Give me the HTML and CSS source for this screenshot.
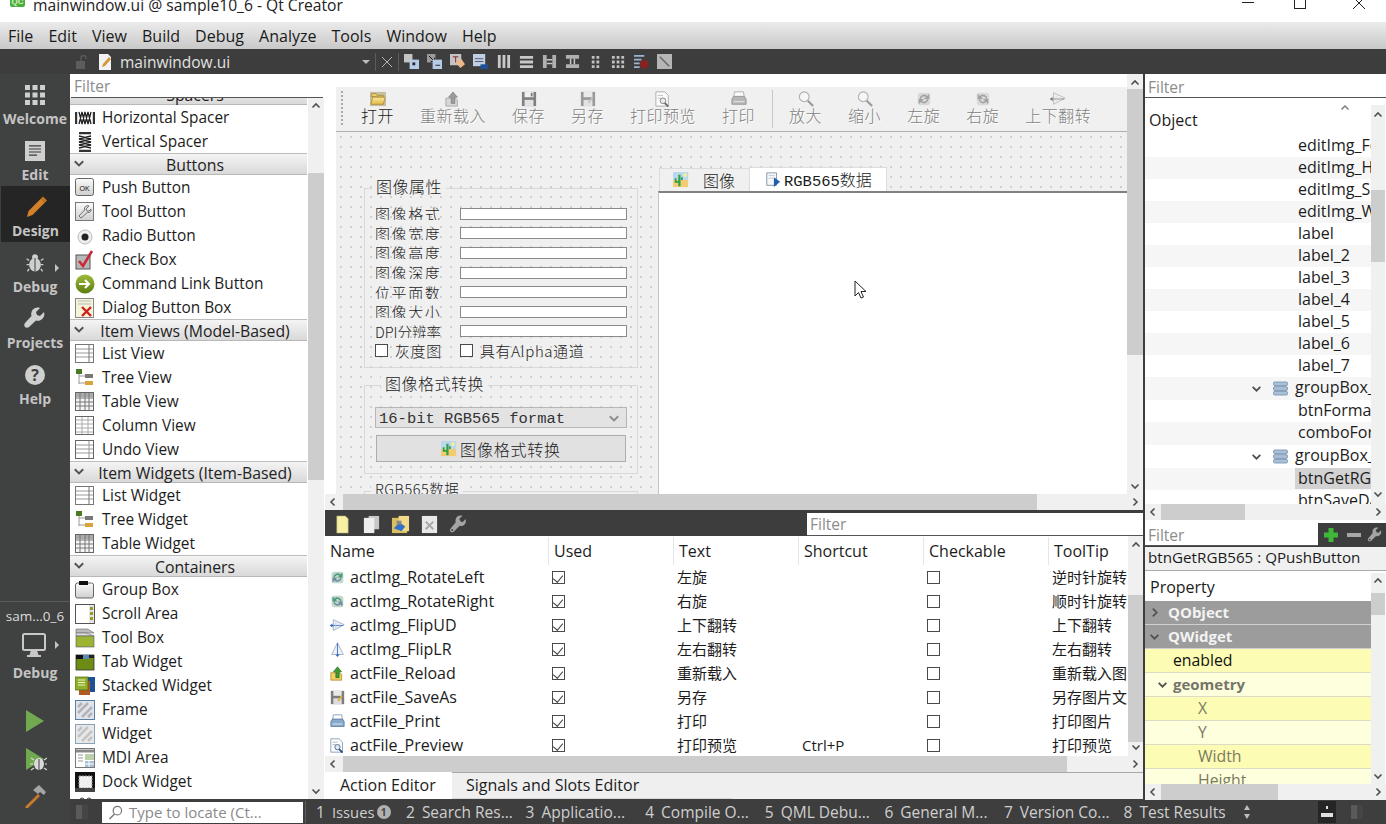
FILE: index.html
```html
<!DOCTYPE html>
<html lang="en">
<head>
<meta charset="utf-8">
<title>mainwindow.ui @ sample10_6 - Qt Creator</title>
<link rel="stylesheet" href="styles.css">
</head>
<body>
<svg class="sprite" xmlns="http://www.w3.org/2000/svg">
  <defs>
    <linearGradient id="gBtn" x1="0" y1="0" x2="0" y2="1"><stop offset="0" stop-color="#fbfbfb"/><stop offset="1" stop-color="#cfcfcf"/></linearGradient>
    <linearGradient id="gGreen" x1="0" y1="0" x2="0" y2="1"><stop offset="0" stop-color="#9dbb3a"/><stop offset="1" stop-color="#5c7d12"/></linearGradient>
    <linearGradient id="gFolder" x1="0" y1="0" x2="0" y2="1"><stop offset="0" stop-color="#fbe89a"/><stop offset="1" stop-color="#e3b94a"/></linearGradient>
    <symbol id="c-up" viewBox="0 0 10 10"><path d="M1.5 6.5 5 3l3.5 3.5" fill="none" stroke="#505050" stroke-width="1.6"/></symbol>
    <symbol id="c-dn" viewBox="0 0 10 10"><path d="M1.5 3.5 5 7l3.500-3.500" fill="none" stroke="#505050" stroke-width="1.6"/></symbol>
    <symbol id="c-l" viewBox="0 0 10 10"><path d="M6.500 1.500 3 5l3.500 3.500" fill="none" stroke="#505050" stroke-width="1.6"/></symbol>
    <symbol id="c-r" viewBox="0 0 10 10"><path d="M3.500 1.500 7 5 3.500 8.500" fill="none" stroke="#505050" stroke-width="1.600"/></symbol>

    <symbol id="m-welcome" viewBox="0 0 20 20"><path fill="#cfcfcf" d="M0 0h5v5H0zM7.500 0h5v5h-5zM15 0h5v5h-5zM0 7.500h5v5H0zM7.500 7.500h5v5h-5zM15 7.500h5v5h-5zM0 15h5v5H0zM7.500 15h5v5h-5zM15 15h5v5h-5z"/></symbol>
    <symbol id="m-edit" viewBox="0 0 20 20"><rect width="20" height="20" fill="#cfcfcf"/><path d="M4 5h12M4 8h12M4 11h12M4 14h8" stroke="#3d3d3d" stroke-width="1.200"/></symbol>
    <symbol id="m-design" viewBox="0 0 24 24"><path d="M3 22l1.500-6L17 3.500l4 4L8.500 20z" fill="#d2802a"/><path d="M17 3.500l2-2 4 4-2 2z" fill="#c9741f"/></symbol>
    <symbol id="m-debug" viewBox="0 0 24 24"><ellipse cx="12" cy="14" rx="7" ry="8" fill="#cfcfcf"/><circle cx="12" cy="5" r="3.500" fill="#cfcfcf"/><path d="M5 9 2 7M19 9l3-2M5 14H2M19 14h3M5 19l-2 3M19 19l2 3" stroke="#cfcfcf" stroke-width="1.600"/><path d="M12 6v16" stroke="#3f4040" stroke-width="1.200"/></symbol>
    <symbol id="m-proj" viewBox="0 0 24 24"><path d="M21 5l-4 4-3-1-1-3 4-4c-3-1-6 0-7.500 2C8 5 8 7.500 8.500 9L2 16c-1 1-1 3 0 4s3 1 4 0l7-6.500c1.500.5 4 .5 5.500-1C21 11 22 8 21 5z" fill="#cfcfcf"/></symbol>
    <symbol id="m-help" viewBox="0 0 24 24"><circle cx="12" cy="12" r="10" fill="#cfcfcf"/><text x="12" y="18" text-anchor="middle" font-family="Open Sans" font-weight="700" font-size="16" fill="#3f4040">?</text></symbol>
    <symbol id="m-mon" viewBox="0 0 24 24"><rect x="1" y="1" width="22" height="16" rx="1.500" fill="#3f4040" stroke="#c8c8c8" stroke-width="2"/><path d="M9 17h6l1.500 5h-9z" fill="#c8c8c8"/><path d="M5 22h14v2H5z" fill="#c8c8c8"/></symbol>
    <symbol id="m-play" viewBox="0 0 20 24"><path d="M1 1l18 11L1 23z" fill="#71a950"/></symbol>
    <symbol id="m-playb" viewBox="0 0 22 24"><path d="M1 1l18 11L1 23z" fill="#71a950"/><ellipse cx="14" cy="17" rx="5" ry="6" fill="#dadada"/><path d="M14 11v12M9 13l-3-2M19 13l3-2M8 17H5M20 17h3M9 21l-3 2M19 21l3 2" stroke="#dadada" stroke-width="1.200"/><path d="M14 12v11" stroke="#3f4040"/></symbol>
    <symbol id="m-ham" viewBox="0 0 24 24"><path d="M2 23l13-13 2 2L4 25z" fill="#c97a2b"/><path d="M10 6l6-5 7 7-2 3-4-3-2 2z" fill="#a5a5a5"/></symbol>

    <symbol id="w-hs" viewBox="0 0 20 20"><path d="M1 4v12M19 4v12" stroke="#333" stroke-width="2.400"/><path d="M4 4l3 12 3-12 3 12 3-12M4 16l3-12 3 12 3-12 3 12" fill="none" stroke="#222" stroke-width="1.300"/></symbol>
    <symbol id="w-vs" viewBox="0 0 20 20"><path d="M4 1h12M4 19h12" stroke="#333" stroke-width="2.400"/><path d="M4 4l12 3L4 10l12 3L4 16M16 4 4 7l12 3L4 13l12 3" fill="none" stroke="#222" stroke-width="1.300"/></symbol>
    <symbol id="w-push" viewBox="0 0 20 20"><rect x=".5" y=".5" width="18" height="17" rx="2" fill="url(#gBtn)" stroke="#666"/><text x="9.500" y="12.500" text-anchor="middle" font-family="Liberation Sans" font-size="7" fill="#111">OK</text></symbol>
    <symbol id="w-tool" viewBox="0 0 20 20"><rect x=".5" y=".5" width="18" height="18" fill="url(#gBtn)" stroke="#777"/><path d="M14 4l-3 3 1 2 2 0 2-2c.5 2-1 4-3.500 3.500L6 16l-2-2 5.500-6C9 5 11 3 14 4z" fill="#ddd" stroke="#555" stroke-width=".8"/></symbol>
    <symbol id="w-radio" viewBox="0 0 20 20"><circle cx="10" cy="11" r="7" fill="#eee" stroke="#bbb"/><circle cx="10" cy="11" r="3.500" fill="#222"/></symbol>
    <symbol id="w-check" viewBox="0 0 20 20"><rect x="1" y="5" width="14" height="14" fill="#b8b8b8" stroke="#555"/><path d="M4 11l4 5 9-15" fill="none" stroke="#c82a3a" stroke-width="2.600"/></symbol>
    <symbol id="w-cmd" viewBox="0 0 20 20"><circle cx="10" cy="10" r="9.500" fill="url(#gGreen)"/><path d="M4 10h10M10 6l4 4-4 4" fill="none" stroke="#fff" stroke-width="2"/></symbol>
    <symbol id="w-dlg" viewBox="0 0 20 20"><rect x=".5" y=".5" width="18" height="19" fill="#f4f4d8" stroke="#888"/><path d="M3 3h13M3 6h13" stroke="#bbb"/><path d="M7 9l9 9M16 9l-9 9" stroke="#d02020" stroke-width="2.400"/></symbol>
    <symbol id="w-list" viewBox="0 0 20 20"><rect x=".5" y=".5" width="18" height="18" fill="#fff" stroke="#777"/><path d="M1 5h17M1 9h17M1 13h17" stroke="#999"/><path d="M14 1v17" stroke="#777"/></symbol>
    <symbol id="w-tree" viewBox="0 0 20 20"><path d="M4 4v12M4 8h6M4 15h6" stroke="#999"/><rect x="1" y="1" width="6" height="5" fill="#4a7a22"/><rect x="10" y="6" width="8" height="4" fill="#777"/><rect x="10" y="13" width="8" height="4" fill="#d9a43c"/></symbol>
    <symbol id="w-table" viewBox="0 0 20 20"><rect x=".5" y=".5" width="18" height="18" fill="#f5f5f5" stroke="#666"/><path d="M1 3h17" stroke="#aaa" stroke-width="4"/><path d="M1 6h17M1 10h17M1 14h17M5 1v17M10 1v17M14 1v17" stroke="#777"/></symbol>
    <symbol id="w-col" viewBox="0 0 20 20"><rect x=".5" y=".5" width="18" height="18" fill="#fff" stroke="#666"/><path d="M1 4h17M1 8h17M1 12h17M1 16h17M7 1v17M13 1v17" stroke="#aaa"/></symbol>
    <symbol id="w-undo" viewBox="0 0 20 20"><rect x=".5" y=".5" width="18" height="18" fill="#fff" stroke="#666"/><path d="M1 5h17M1 9h17M1 13h17M14 1v17" stroke="#999"/></symbol>
    <symbol id="w-group" viewBox="0 0 20 20"><rect x=".5" y="3" width="18" height="15" rx="2" fill="url(#gBtn)" stroke="#666"/><rect x="4" y="1" width="9" height="4" fill="#111"/></symbol>
    <symbol id="w-scroll" viewBox="0 0 20 20"><rect x=".5" y=".5" width="19" height="19" fill="#fff" stroke="#555"/><rect x="14" y="1" width="5" height="18" fill="#e4e4e4"/><path d="M16.500 3v14" stroke="#9a9a20" stroke-width="3" stroke-dasharray="3 2"/></symbol>
    <symbol id="w-tbox" viewBox="0 0 20 20"><path d="M1 1h12l6 4H1z" fill="#bbb" stroke="#666" stroke-width=".6"/><path d="M1 5h10l8 3H1z" fill="#ddd" stroke="#666" stroke-width=".6"/><rect x="1" y="8" width="18" height="11" fill="#9bb532" stroke="#556" stroke-width=".6"/></symbol>
    <symbol id="w-tabw" viewBox="0 0 20 20"><rect x="1" y="3" width="18" height="15" fill="#6d8c16" stroke="#333" stroke-width=".8"/><rect x="1" y="3" width="7" height="4" fill="#111"/><rect x="8" y="3" width="6" height="4" fill="#5b86b8"/><rect x="14" y="3" width="5" height="3" fill="#222"/></symbol>
    <symbol id="w-stack" viewBox="0 0 20 20"><rect x="9" y="1" width="11" height="15" fill="#1f4f97"/><rect x="4" y="5" width="11" height="14" fill="#b15a22"/><rect x="0" y="1" width="13" height="13" fill="#8eb02c" stroke="#4e6410" stroke-width=".7"/><path d="M3 4h7M3 6.500h7M3 9h7" stroke="#f5f5c8"/></symbol>
    <symbol id="w-frame" viewBox="0 0 20 20"><rect x=".5" y=".5" width="19" height="19" fill="#e0e4ea" stroke="#5b7fa0"/><path d="M3 13 13 3M7 17 17 7M3 7l4-4M13 17l4-4" stroke="#b4b4b8" stroke-width="2.500"/></symbol>
    <symbol id="w-widget" viewBox="0 0 20 20"><rect x=".5" y=".5" width="19" height="19" fill="#e8e8e8" stroke="#8aa2b8"/><path d="M3 13 13 3M7 17 17 7M3 7l4-4M13 17l4-4" stroke="#c4c4c4" stroke-width="2.500"/></symbol>
    <symbol id="w-mdi" viewBox="0 0 20 20"><rect x=".5" y=".5" width="19" height="19" fill="#fff" stroke="#777"/><path d="M1 3h18" stroke="#888" stroke-width="3"/><path d="M3 7h5M3 10h5M3 13h5" stroke="#999"/><rect x="10" y="6" width="9" height="6" fill="#bcd0a8"/><rect x="10" y="13" width="9" height="6" fill="#a8bfd6"/><path d="M14 13v6M10 16h9" stroke="#fff"/></symbol>
    <symbol id="w-dock" viewBox="0 0 20 20"><rect width="20" height="20" fill="#111"/><rect x="4" y="4" width="13" height="12" fill="#f0f0f0" stroke="#999" stroke-dasharray="2 1"/><rect x="0" y="16" width="20" height="4" fill="#444"/></symbol>
    <symbol id="w-dots" viewBox="0 0 20 20"><circle cx="7" cy="4" r="2" fill="none" stroke="#333"/><circle cx="14" cy="4" r="2" fill="none" stroke="#333"/></symbol>

    <symbol id="a-open" viewBox="0 0 18 18"><rect width="18" height="16" y="1" fill="#c8bfa0"/><path d="M1 6l1-3h5l1 2h7v2z" fill="#ecd06a" stroke="#9a7d20" stroke-width=".7"/><path d="M1 15 3 7h14l-2 8z" fill="url(#gFolder)" stroke="#9a7d20" stroke-width=".7"/></symbol>
    <symbol id="a-reload" viewBox="0 0 18 18"><path d="M1 8h10l3 2v7H1z" fill="#f3cf63" stroke="#9a7d20" stroke-width=".8"/><path d="M9 1l5 6h-3v7H7V7H4z" fill="#3e9a2e" stroke="#23661a" stroke-width=".7"/></symbol>
    <symbol id="a-save" viewBox="0 0 18 18"><path d="M1 1h16v16H1z" fill="#5b5b5b"/><rect x="4" y="1" width="10" height="6" fill="#eee"/><rect x="11" y="2" width="2" height="4" fill="#555"/><rect x="4" y="10" width="10" height="7" fill="#ddd"/></symbol>
    <symbol id="a-saveas" viewBox="0 0 18 18"><path d="M1 1h16v16H1z" fill="#7d7d7d"/><rect x="4" y="1" width="10" height="6" fill="#e8e8e8"/><rect x="4" y="10" width="10" height="7" fill="#ddd"/><path d="M14 6l-5 6 1 2 5-6z" fill="#e0b040"/></symbol>
    <symbol id="a-prev" viewBox="0 0 18 18"><path d="M1 1h10l4 4v12H1z" fill="#fff" stroke="#6d87a8" stroke-width=".9"/><path d="M3 5h6M3 8h4" stroke="#aaa"/><circle cx="9" cy="11" r="3.200" fill="#dfeaf5" stroke="#4a6a90" stroke-width="1.100"/><path d="M11 13.500l4 4" stroke="#1c3f78" stroke-width="2"/></symbol>
    <symbol id="a-print" viewBox="0 0 18 18"><path d="M4 1h10l1 6H3z" fill="#fff" stroke="#5f7da0" stroke-width=".8"/><path d="M1 9l2-3h12l2 3v6H1z" fill="#87a9cc" stroke="#4a6a90" stroke-width=".8"/><path d="M3 12h12" stroke="#e8eef5"/></symbol>
    <symbol id="a-zin" viewBox="0 0 18 18"><circle cx="7" cy="6.500" r="5.500" fill="#f5f8fb" stroke="#8a9aae" stroke-width="1.200"/><path d="M11 11l6 6" stroke="#6f7f92" stroke-width="2.400"/></symbol>
    <symbol id="a-rotl" viewBox="0 0 18 18"><rect x="2" y="2" width="14" height="14" rx="3" fill="#bdd8cc"/><path d="M4 9a5 5 0 0 1 8.500-3.500L15 3v6h-6l2.200-2.200A3.500 3.500 0 0 0 5.500 9z" fill="#4e9a7c"/><path d="M14 9a5 5 0 0 1-8.500 3.500L3 15V9h6l-2.200 2.200A3.500 3.500 0 0 0 12.500 9z" fill="#6f8f9e"/></symbol>
    <symbol id="a-rotr" viewBox="0 0 18 18"><rect x="2" y="2" width="14" height="14" rx="3" fill="#c4d8cc"/><path d="M14 9a5 5 0 0 0-8.500-3.500L3 3v6h6L6.800 6.800A3.500 3.500 0 0 1 12.500 9z" fill="#4e9a7c"/><path d="M4 9a5 5 0 0 0 8.500 3.500L15 15V9H9l2.200 2.200A3.500 3.500 0 0 1 5.500 9z" fill="#6f8f9e"/></symbol>
    <symbol id="a-fud" viewBox="0 0 18 18"><path d="M4 2l13 6-13 7z" fill="#f0f2f6" stroke="#8ea0bc" stroke-width=".9"/><path d="M0 9h16" stroke="#4f7fcc" stroke-width="1.300"/><path d="M0 9l3-2.500v5z" fill="#2b63c4"/><path d="M7 5v8M11 6.500v5" stroke="#c5cede"/></symbol>
    <symbol id="a-flr" viewBox="0 0 18 18"><path d="M9 1L2 15h14z" fill="#f0f2f6" stroke="#8ea0bc" stroke-width=".9"/><path d="M9 1v15" stroke="#4f7fcc" stroke-width="1.300"/><path d="M9 18l-2.500-3h5z" fill="#2b63c4"/></symbol>
    <symbol id="a-img" viewBox="0 0 18 18"><rect width="17" height="17" fill="#f3cc72"/><rect width="17" height="9" fill="#bcd8ec"/><path d="M6 16V3h2.500v13zM2 7h2v3h2v2H2zM11 6H9v3h2z" fill="#2fa04a"/><circle cx="13.500" cy="3.500" r="2" fill="#fff18a"/></symbol>
    <symbol id="a-doc" viewBox="0 0 18 18"><path d="M2 1h11v14H2z" fill="#f6f8fb" stroke="#7d8da3"/><path d="M4 4h7M4 7h5" stroke="#c0c6d0"/><path d="M10 6l7 5-7 6z" fill="#1f5fae"/></symbol>
    <symbol id="t-new" viewBox="0 0 16 20"><path d="M2 1h9l3 3v15H2z" fill="#f8f1a4" stroke="#aaa576" stroke-width=".6"/></symbol>
    <symbol id="t-copy" viewBox="0 0 20 20"><path d="M7 1h11v14H7z" fill="#c8c8c8"/><path d="M2 3h11v16H2z" fill="#eeeeee"/></symbol>
    <symbol id="t-col" viewBox="0 0 20 20"><path d="M1 3h16v16H1z" fill="#d8bf60"/><path d="M8 1h11v16H8z" fill="#f3d98a"/><path d="M3 14l6-6 6 4-4 5z" fill="#3570c8"/><path d="M6 6h5v4H6z" fill="#888"/></symbol>
    <symbol id="t-del" viewBox="0 0 18 20"><path d="M1 1h16v18H1z" fill="#e8e8e8"/><path d="M5 7l8 8M13 7l-8 8" stroke="#a8a8a8" stroke-width="2"/></symbol>
    <symbol id="t-wr" viewBox="0 0 24 24"><path d="M21 5l-4 4-2.500-1L13 5l4-4c-3-1-6 0-7.500 2C8 5 8 7.500 8.500 9L2 17c-1 1-1 3 0 4s3 1 4 0l7.500-7.500c1.500.5 4 .5 5.500-1C21 11 22 8 21 5z" fill="#a4a4a4"/><circle cx="4" cy="19" r="1.200" fill="#3f3f3f"/></symbol>
    <symbol id="t-tree" viewBox="0 0 16 16"><rect x=".5" y="1" width="15" height="4" rx="1.500" fill="#a9c0d8" stroke="#5f7f9e" stroke-width=".7"/><rect x=".5" y="6" width="15" height="4" rx="1.500" fill="#a9c0d8" stroke="#5f7f9e" stroke-width=".7"/><rect x=".5" y="11" width="15" height="4" rx="1.500" fill="#a9c0d8" stroke="#5f7f9e" stroke-width=".7"/></symbol>
  </defs>
</svg>

<div class="app">
  <header class="titlebar">
    <div class="title-left">
      <span class="qt-logo">QC</span>
      <span class="title-text">mainwindow.ui @ sample10_6 - Qt Creator</span>
    </div>
    <div class="winbtns">
      <span class="wb wb-min"></span>
      <span class="wb wb-max"></span>
      <svg class="wb-close" viewBox="0 0 12 12"><path d="M0 0l12 12M12 0 0 12" stroke="#222" stroke-width="1"/></svg>
    </div>
  </header>

  <nav class="menubar">
    <span>File</span><span>Edit</span><span>View</span><span>Build</span><span>Debug</span><span>Analyze</span><span>Tools</span><span>Window</span><span>Help</span>
  </nav>

  <div class="shell">
    <aside class="modebar">
      <div class="mode-top"></div>
      <div class="mode"><svg class="mi mi-20"><use href="#m-welcome"/></svg><b>Welcome</b></div>
      <div class="mode"><svg class="mi mi-20"><use href="#m-edit"/></svg><b>Edit</b></div>
      <div class="mode is-active"><svg class="mi"><use href="#m-design"/></svg><b>Design</b></div>
      <div class="mode"><svg class="mi mi-20"><use href="#m-debug"/></svg><b>Debug</b><i class="tri tri-mode"></i></div>
      <div class="mode"><svg class="mi"><use href="#m-proj"/></svg><b>Projects</b></div>
      <div class="mode"><svg class="mi"><use href="#m-help"/></svg><b>Help</b></div>
      <div class="kit">
        <div class="kit-name">sam...0_6</div>
        <div class="kit-mon"><svg class="mon"><use href="#m-mon"/></svg><i class="tri"></i></div>
        <b class="kit-label">Debug</b>
        <svg class="run run-play"><use href="#m-play"/></svg>
        <svg class="run run-dbg"><use href="#m-playb"/></svg>
        <svg class="run run-ham"><use href="#m-ham"/></svg>
      </div>
    </aside>

    <div class="workspace">
      <div class="docbar">
        <svg class="lock" viewBox="0 0 12 14"><rect x="0" y="6" width="9" height="8" fill="#5c5c5c"/><path d="M5 6V3a2.500 2.500 0 0 1 5 0v1" fill="none" stroke="#5c5c5c" stroke-width="1.300"/></svg>
        <svg class="docfile" viewBox="0 0 14 16"><path d="M1 0h9l3 3v13H1z" fill="#f2f2f2"/><path d="M4 13l1-3 6-7 2 2-6 7z" fill="#d5963a"/></svg>
        <span class="docname">mainwindow.ui</span>
        <i class="tri-down"></i>
        <span class="docsep"></span>
        <svg class="docx" viewBox="0 0 10 10"><path d="M0 0l10 10M10 0 0 10" stroke="#b4b4b4"/></svg>
        <span class="docsep"></span>
        <div class="lay-icons">
          <svg viewBox="0 0 16 16"><rect width="9" height="9" fill="#c4c4c4"/><rect x="6" y="6" width="10" height="10" fill="#b6cbe6"/><rect x="9" y="9" width="3" height="3" fill="#223"/></svg>
          <svg viewBox="0 0 16 16"><rect width="9" height="9" fill="#9a9a9a"/><path d="M2 2l6 6M8 4v4H4" stroke="#111" fill="none"/><rect x="6" y="6" width="10" height="10" fill="#b6cbe6"/><path d="M9 12h5" stroke="#223"/></svg>
          <svg viewBox="0 0 16 16"><rect width="12" height="12" fill="#c4c4c4"/><path d="M3 3h6M6 3v6" stroke="#822"/><path d="M6 9l6-4 4 6-5 4z" fill="#eeb78a"/></svg>
          <svg viewBox="0 0 16 16"><rect width="13" height="13" fill="#c0d0e4"/><path d="M2 5h9M2 8h9" stroke="#556"/><rect x="8" y="11" width="8" height="5" fill="#1f4f97"/></svg>
          <svg viewBox="0 0 16 16"><path d="M2 1h3v14H2zM7 1h3v14H7zM12 1h3v14h-3z" fill="#c8c8c8"/></svg>
          <svg viewBox="0 0 16 16"><path d="M1 2h14v3H1zM1 7h14v3H1zM1 12h14v3H1z" fill="#c8c8c8"/></svg>
          <svg viewBox="0 0 16 16"><path d="M1 1h4v14H1zM11 1h4v14h-4z" fill="#b0b0b0"/><path d="M5 6h6M5 10h6" stroke="#c8c8c8" stroke-width="1.600"/></svg>
          <svg viewBox="0 0 16 16"><path d="M1 1h14v4H1zM1 11h14v4H1z" fill="#b0b0b0"/><path d="M6 5v6M10 5v6" stroke="#c8c8c8" stroke-width="1.600"/></svg>
          <svg viewBox="0 0 16 16"><path d="M4 2h3v3H4zM9 2h3v3H9zM4 7h3v3H4zM9 7h3v3H9zM4 12h3v3H4zM9 12h3v3H9z" fill="#c0c0c0"/></svg>
          <svg viewBox="0 0 16 16"><path d="M1 2h3v3H1zM6 2h3v3H6zM11 2h3v3h-3zM1 7h3v3H1zM6 7h3v3H6zM11 7h3v3h-3zM1 12h3v3H1zM6 12h3v3H6zM11 12h3v3h-3z" fill="#c0c0c0"/></svg>
          <svg viewBox="0 0 16 16"><path d="M0 1h11v2H0zM0 5h8v2H0zM0 9h6v2H0zM0 13h6v2H0z" fill="#9db4d0"/><circle cx="11" cy="11" r="4.500" fill="#8c2020"/></svg>
          <svg viewBox="0 0 16 16"><rect width="16" height="16" fill="#b5b5b5"/><path d="M3 3l10 10" stroke="#666" stroke-width="1.500"/></svg>
        </div>
      </div>

      <div class="panels">
        <section class="widgetbox">
          <div class="filter"><span>Filter</span></div>
          <div class="wb-body">
            <div class="wb-list">
              <div class="wb-scroll">
                <div class="cat cat-first">Spacers</div>
                <div class="wi"><svg><use href="#w-hs"/></svg>Horizontal Spacer</div>
                <div class="wi"><svg><use href="#w-vs"/></svg>Vertical Spacer</div>
                <div class="cat"><svg class="cat-arr"><use href="#c-dn"/></svg>Buttons</div>
                <div class="wi"><svg><use href="#w-push"/></svg>Push Button</div>
                <div class="wi"><svg><use href="#w-tool"/></svg>Tool Button</div>
                <div class="wi"><svg><use href="#w-radio"/></svg>Radio Button</div>
                <div class="wi"><svg><use href="#w-check"/></svg>Check Box</div>
                <div class="wi"><svg><use href="#w-cmd"/></svg>Command Link Button</div>
                <div class="wi"><svg><use href="#w-dlg"/></svg>Dialog Button Box</div>
                <div class="cat"><svg class="cat-arr"><use href="#c-dn"/></svg>Item Views (Model-Based)</div>
                <div class="wi"><svg><use href="#w-list"/></svg>List View</div>
                <div class="wi"><svg><use href="#w-tree"/></svg>Tree View</div>
                <div class="wi"><svg><use href="#w-table"/></svg>Table View</div>
                <div class="wi"><svg><use href="#w-col"/></svg>Column View</div>
                <div class="wi"><svg><use href="#w-undo"/></svg>Undo View</div>
                <div class="cat"><svg class="cat-arr"><use href="#c-dn"/></svg>Item Widgets (Item-Based)</div>
                <div class="wi"><svg><use href="#w-list"/></svg>List Widget</div>
                <div class="wi"><svg><use href="#w-tree"/></svg>Tree Widget</div>
                <div class="wi"><svg><use href="#w-table"/></svg>Table Widget</div>
                <div class="cat"><svg class="cat-arr"><use href="#c-dn"/></svg>Containers</div>
                <div class="wi"><svg><use href="#w-group"/></svg>Group Box</div>
                <div class="wi"><svg><use href="#w-scroll"/></svg>Scroll Area</div>
                <div class="wi"><svg><use href="#w-tbox"/></svg>Tool Box</div>
                <div class="wi"><svg><use href="#w-tabw"/></svg>Tab Widget</div>
                <div class="wi"><svg><use href="#w-stack"/></svg>Stacked Widget</div>
                <div class="wi"><svg><use href="#w-frame"/></svg>Frame</div>
                <div class="wi"><svg><use href="#w-widget"/></svg>Widget</div>
                <div class="wi"><svg><use href="#w-mdi"/></svg>MDI Area</div>
                <div class="wi"><svg><use href="#w-dock"/></svg>Dock Widget</div>
                <div class="wi"><svg><use href="#w-dots"/></svg></div>
              </div>
            </div>
            <div class="vsb vsb-wb">
              <svg class="ar"><use href="#c-up"/></svg>
              <div class="vtrack"><div class="vthumb"></div></div>
              <svg class="ar"><use href="#c-dn"/></svg>
            </div>
          </div>
        </section>

        <section class="center">
          <div class="formarea">
            <div class="canvas">
              <div class="form">
                <div class="form-tb">
                  <span class="handle"></span>
                  <div class="tbtn"><svg><use href="#a-open"/></svg>打开</div>
                  <div class="tbtn dis"><svg><use href="#a-reload"/></svg>重新载入</div>
                  <div class="tbtn dis"><svg><use href="#a-save"/></svg>保存</div>
                  <div class="tbtn dis"><svg><use href="#a-saveas"/></svg>另存</div>
                  <div class="tbtn dis"><svg><use href="#a-prev"/></svg>打印预览</div>
                  <div class="tbtn dis"><svg><use href="#a-print"/></svg>打印</div>
                  <span class="tsep"></span>
                  <div class="tbtn dis"><svg><use href="#a-zin"/></svg>放大</div>
                  <div class="tbtn dis"><svg><use href="#a-zin"/></svg>缩小</div>
                  <div class="tbtn dis"><svg><use href="#a-rotl"/></svg>左旋</div>
                  <div class="tbtn dis"><svg><use href="#a-rotr"/></svg>右旋</div>
                  <div class="tbtn dis"><svg><use href="#a-fud"/></svg>上下翻转</div>
                </div>
                <div class="design">
                  <div class="leftcol">
                    <div class="gbox gbox-attr">
                      <div class="gtitle gt-attr">图像属性</div>
                      <div class="frow frow-first"><span class="flabel">图像格式</span><span class="finput"></span></div>
                      <div class="frow"><span class="flabel">图像宽度</span><span class="finput"></span></div>
                      <div class="frow"><span class="flabel">图像高度</span><span class="finput"></span></div>
                      <div class="frow"><span class="flabel">图像深度</span><span class="finput"></span></div>
                      <div class="frow"><span class="flabel">位平面数</span><span class="finput"></span></div>
                      <div class="frow"><span class="flabel">图像大小</span><span class="finput"></span></div>
                      <div class="frow"><span class="flabel flabel-dpi">DPI分辨率</span><span class="finput"></span></div>
                      <div class="fchecks">
                        <span class="fcheck fcheck-1"><i class="cb"></i>灰度图</span>
                        <span class="fcheck"><i class="cb"></i>具有Alpha通道</span>
                      </div>
                    </div>
                    <div class="gbox gbox-conv">
                      <div class="gtitle gt-conv">图像格式转换</div>
                      <div class="combo"><span>16-bit RGB565 format</span><svg class="combo-ar"><use href="#c-dn"/></svg></div>
                      <div class="pbtn"><svg><use href="#a-img"/></svg>图像格式转换</div>
                    </div>
                    <div class="gbox gbox-rgb">
                      <div class="gtitle gt-rgb">RGB565数据</div>
                    </div>
                  </div>
                  <div class="tabw">
                    <div class="tabbar">
                      <div class="tab tab-1"><svg><use href="#a-img"/></svg>图像</div>
                      <div class="tab tab-2"><svg><use href="#a-doc"/></svg><span><span class="tabmono">RGB565</span>数据</span></div>
                    </div>
                    <div class="tabpane">
                      <svg class="cursor" viewBox="0 0 13 20"><path d="M1 1v15l3.500-3.500L7 18l2.500-1-2.500-5.500h5z" fill="#fff" stroke="#222"/></svg>
                    </div>
                  </div>
                </div>
              </div>
            </div>
            <div class="vsb vsb-form">
              <svg class="ar"><use href="#c-up"/></svg>
              <div class="vtrack"><div class="vthumb"></div></div>
              <svg class="ar"><use href="#c-dn"/></svg>
            </div>
            <div class="hsb hsb-form">
              <svg class="ar"><use href="#c-l"/></svg>
              <div class="htrack"><div class="hthumb"></div></div>
              <svg class="ar"><use href="#c-r"/></svg>
            </div>
          </div>

          <div class="action">
            <div class="act-tb">
              <div class="act-icons">
                <svg class="ti-new"><use href="#t-new"/></svg>
                <svg><use href="#t-copy"/></svg>
                <svg><use href="#t-col"/></svg>
                <svg><use href="#t-del"/></svg>
                <svg><use href="#t-wr"/></svg>
              </div>
              <div class="filter act-filter"><span>Filter</span></div>
            </div>
            <div class="act-main">
              <div class="act-table">
                <div class="arow ahead"><span>Name</span><span>Used</span><span>Text</span><span>Shortcut</span><span>Checkable</span><span>ToolTip</span></div>
                <div class="arow"><span class="an"><svg><use href="#a-rotl"/></svg>actImg_RotateLeft</span><span><i class="cb on"></i></span><span>左旋</span><span></span><span><i class="cb"></i></span><span>逆时针旋转</span></div>
                <div class="arow"><span class="an"><svg><use href="#a-rotr"/></svg>actImg_RotateRight</span><span><i class="cb on"></i></span><span>右旋</span><span></span><span><i class="cb"></i></span><span>顺时针旋转</span></div>
                <div class="arow"><span class="an"><svg><use href="#a-fud"/></svg>actImg_FlipUD</span><span><i class="cb on"></i></span><span>上下翻转</span><span></span><span><i class="cb"></i></span><span>上下翻转</span></div>
                <div class="arow"><span class="an"><svg><use href="#a-flr"/></svg>actImg_FlipLR</span><span><i class="cb on"></i></span><span>左右翻转</span><span></span><span><i class="cb"></i></span><span>左右翻转</span></div>
                <div class="arow"><span class="an"><svg><use href="#a-reload"/></svg>actFile_Reload</span><span><i class="cb on"></i></span><span>重新载入</span><span></span><span><i class="cb"></i></span><span>重新载入图</span></div>
                <div class="arow"><span class="an"><svg><use href="#a-saveas"/></svg>actFile_SaveAs</span><span><i class="cb on"></i></span><span>另存</span><span></span><span><i class="cb"></i></span><span>另存图片文</span></div>
                <div class="arow"><span class="an"><svg><use href="#a-print"/></svg>actFile_Print</span><span><i class="cb on"></i></span><span>打印</span><span></span><span><i class="cb"></i></span><span>打印图片</span></div>
                <div class="arow"><span class="an"><svg><use href="#a-prev"/></svg>actFile_Preview</span><span><i class="cb on"></i></span><span>打印预览</span><span>Ctrl+P</span><span><i class="cb"></i></span><span>打印预览</span></div>
              </div>
              <div class="vsb vsb-act">
                <svg class="ar"><use href="#c-up"/></svg>
                <div class="vtrack"><div class="vthumb"></div></div>
                <svg class="ar"><use href="#c-dn"/></svg>
              </div>
            </div>
            <div class="hsb hsb-act">
              <svg class="ar"><use href="#c-l"/></svg>
              <div class="htrack"><div class="hthumb"></div></div>
              <svg class="ar"><use href="#c-r"/></svg>
            </div>
            <div class="act-tabs">
              <div class="atab atab-on">Action Editor</div>
              <div class="atab">Signals and Slots Editor</div>
            </div>
          </div>
        </section>

        <section class="right">
          <div class="obj">
            <div class="filter obj-filter"><span>Filter</span></div>
            <div class="obj-main">
              <div class="tree">
                <div class="tree-head">Object<svg class="sortup"><use href="#c-up"/></svg></div>
                <div class="trow">editImg_Format</div>
                <div class="trow alt">editImg_Height</div>
                <div class="trow">editImg_Size</div>
                <div class="trow alt">editImg_Width</div>
                <div class="trow">label</div>
                <div class="trow alt">label_2</div>
                <div class="trow">label_3</div>
                <div class="trow alt">label_4</div>
                <div class="trow">label_5</div>
                <div class="trow alt">label_6</div>
                <div class="trow">label_7</div>
                <div class="trow tall alt gb"><svg class="tr-ar"><use href="#c-dn"/></svg><svg class="tr-ic"><use href="#t-tree"/></svg>groupBox_2</div>
                <div class="trow tall">btnFormatConvert</div>
                <div class="trow tall alt">comboFormat</div>
                <div class="trow tall gb"><svg class="tr-ar"><use href="#c-dn"/></svg><svg class="tr-ic"><use href="#t-tree"/></svg>groupBox_3</div>
                <div class="trow tall alt"><span class="tsel">btnGetRGB565</span></div>
                <div class="trow tall">btnSaveData</div>
              </div>
              <div class="vsb vsb-obj">
                <svg class="ar"><use href="#c-up"/></svg>
                <div class="vtrack"><div class="vthumb"></div></div>
                <svg class="ar"><use href="#c-dn"/></svg>
              </div>
            </div>
            <div class="hsb hsb-obj">
              <svg class="ar"><use href="#c-l"/></svg>
              <div class="htrack"><div class="hthumb"></div></div>
              <svg class="ar"><use href="#c-r"/></svg>
            </div>
          </div>

          <div class="prop">
            <div class="prop-tb">
              <div class="filter prop-filter"><span>Filter</span></div>
              <svg class="pt-ic" viewBox="0 0 16 16"><path d="M5.500 1h5v4.500H15v5h-4.500V15h-5v-4.500H1v-5h4.500z" fill="#3fb83a"/></svg>
              <svg class="pt-ic" viewBox="0 0 16 16"><path d="M1 6h14v4H1z" fill="#a8a8a8"/></svg>
              <svg class="pt-ic"><use href="#t-wr"/></svg>
            </div>
            <div class="prop-class">btnGetRGB565 : QPushButton</div>
            <div class="prop-main">
              <div class="ptree">
                <div class="phead">Property</div>
                <div class="psec"><svg class="ps-ar"><use href="#c-r"/></svg>QObject</div>
                <div class="psec"><svg class="ps-ar ps-open"><use href="#c-dn"/></svg>QWidget</div>
                <div class="prow y1"><span class="on">enabled</span></div>
                <div class="prow y2"><svg class="ps-ar pg"><use href="#c-dn"/></svg><b>geometry</b></div>
                <div class="prow y1 sub">X</div>
                <div class="prow y2 sub">Y</div>
                <div class="prow y1 sub">Width</div>
                <div class="prow y2 sub">Height</div>
              </div>
              <div class="vsb vsb-prop">
                <svg class="ar"><use href="#c-up"/></svg>
                <div class="vtrack"><div class="vthumb"></div></div>
                <svg class="ar"><use href="#c-dn"/></svg>
              </div>
            </div>
            <div class="hsb hsb-prop">
              <svg class="ar"><use href="#c-l"/></svg>
              <div class="htrack"><div class="hthumb"></div></div>
              <svg class="ar"><use href="#c-r"/></svg>
            </div>
          </div>
        </section>
      </div>

      <footer class="status">
        <span class="st-toggle"></span>
        <div class="locate">
          <svg viewBox="0 0 16 16"><circle cx="10" cy="6" r="4.500" fill="none" stroke="#777" stroke-width="1.300"/><path d="M7 9.500 1.500 15" stroke="#777" stroke-width="1.500"/></svg>
          <span>Type to locate (Ct...</span>
        </div>
        <span class="st-sep"></span>
        <div class="outs">
          <span class="out out-1"><em>1</em><span class="out-issues">Issues</span><i class="badge">1</i></span>
          <span class="out"><em>2</em>Search Res...</span>
          <span class="out"><em>3</em>Applicatio...</span>
          <span class="out"><em>4</em>Compile O...</span>
          <span class="out"><em>5</em>QML Debu...</span>
          <span class="out"><em>6</em>General M...</span>
          <span class="out"><em>7</em>Version Co...</span>
          <span class="out"><em>8</em>Test Results</span>
        </div>
        <svg class="st-updn" viewBox="0 0 8 14"><path d="M4 0l3 5H1zM4 14 1 9h6z" fill="#bdbdbd"/></svg>
        <div class="st-box"><svg viewBox="0 0 14 14"><path d="M1 8h12v4H1z" fill="#e0e0e0"/><path d="M7 1v3" stroke="#ddd" stroke-width="2"/></svg></div>
        <span class="st-toggle st-toggle-r"></span>
      </footer>
    </div>
  </div>
</div>
</body>
</html>
```

FILE: styles.css
```css
* { box-sizing: border-box; }
html, body { margin: 0; padding: 0; }
body {
  width: 1386px; height: 824px; overflow: hidden; background: #fff; color: #1c1c1c;
  font: 15px/20px "Open Sans", "Noto Sans CJK SC", sans-serif;
}
i, em { font-style: normal; }
.sprite { width: 0; height: 0; display: block; overflow: hidden; }
.app { display: flex; flex-direction: column; height: 824px; }

/* title + menu */
.titlebar { height: 22px; flex: none; display: flex; justify-content: space-between; overflow: hidden; background: #fff; }
.title-left { display: flex; align-items: flex-start; padding-left: 10px; margin-top: -5px; font-size: 15.650px; }
.qt-logo { width: 15px; height: 12px; background: #4caf3c; color: #d7f0c8; border-radius: 2px; font: 700 8px/14px "Liberation Sans", sans-serif; text-align: center; margin-top: 0; }
.title-text { margin-left: 8px; line-height: 20px; color: #222; }
.winbtns { position: relative; width: 160px; }
.wb { position: absolute; display: block; }
.wb-min { left: 16px; top: 2px; width: 12px; height: 1px; background: #222; }
.wb-max { left: 68px; top: -4px; width: 12px; height: 13px; border: 1px solid #222; }
.wb-close { position: absolute; left: 127px; top: -3px; width: 12px; height: 12px; }
.menubar { height: 27px; flex: none; display: flex; gap: 15.100px; align-items: center; padding-left: 8px; background: linear-gradient(#ebebeb, #c9c9c9); color: #1a1a1a; font-size: 16px; }

/* shell */
.shell { flex: 1; display: flex; min-height: 0; background: #3f3f3f; }
.modebar { width: 70px; flex: none; height: 775px; background: #404141; display: flex; flex-direction: column; color: #c4c4c4; }
.mode-top { height: 25px; flex: none; background: #3d3d3d; }
.mode { height: 56px; flex: none; display: flex; flex-direction: column; align-items: center; padding-top: 9px; position: relative; }
.mode b { font-size: 14px; line-height: 20px; margin-top: 2px; }
.mi { width: 24px; height: 24px; display: block; }
.mi-20 { transform: scale(.84); }
.is-active { background: #252525; margin-left: 1px; color: #c4c4c4; }
.tri { display: block; width: 0; height: 0; border-left: 4px solid #c4c4c4; border-top: 4px solid transparent; border-bottom: 4px solid transparent; }
.tri-mode { position: absolute; left: 55px; top: 22px; }
.kit { margin-top: auto; height: 223px; border-top: 1px solid #5c5c5c; display: flex; flex-direction: column; align-items: center; overflow: hidden; }
.kit-name { height: 29px; line-height: 29px; font-size: 13.500px; color: #dcdcdc; }
.kit-mon { display: flex; align-items: center; gap: 9px; margin-left: 10px; height: 28px; }
.mon { width: 24px; height: 24px; }
.kit-label { font-size: 14px; line-height: 20px; margin-top: 4px; }
.run { display: block; }
.run-play { width: 20px; height: 24px; margin-top: 26px; }
.run-dbg { width: 22px; height: 24px; margin-top: 14px; margin-left: 2px; }
.run-ham { width: 24px; height: 24px; margin-top: 13px; }

.workspace { flex: 1; min-width: 0; display: flex; flex-direction: column; }
.docbar { height: 25px; flex: none; display: flex; align-items: center; background: #3d3d3d; color: #e2e2e2; }
.lock { width: 12px; height: 14px; margin-left: 6px; }
.docfile { width: 14px; height: 16px; margin-left: 10px; }
.docname { margin-left: 8px; width: 242px; font-size: 15.500px; }
.tri-down { width: 0; height: 0; border-top: 4px solid #bbb; border-left: 4px solid transparent; border-right: 4px solid transparent; margin-right: 5px; }
.docsep { width: 1px; height: 18px; background: #5c5c5c; }
.docx { width: 10px; height: 10px; margin: 0 6px; }
.lay-icons { display: flex; gap: 8px; margin-left: 5px; }
.lay-icons svg { width: 15px; height: 15px; display: block; }

.panels { flex: 1; min-height: 0; display: flex; }

/* filter */
.filter { background: #fff; color: #8c8c8c; height: 23px; line-height: 22px; padding-left: 3px; border-bottom: 1px solid #555; font-size: 15.500px; }

/* widget box */
.widgetbox { width: 255px; flex: none; background: #fff; display: flex; flex-direction: column; }
.widgetbox .filter { margin: 1px 2px 0 1px; }
.wb-body { flex: 1; min-height: 0; display: flex; background: #fff; overflow: hidden; }
.wb-list { width: 237px; overflow: hidden; }
.wb-scroll { margin-top: -15px; }
.cat { height: 22px; position: relative; text-align: center; font-size: 15.800px; line-height: 22px; color: #222; background: linear-gradient(#f4f4f4, #d9d9d9); border-top: 1px solid #bdbdbd; border-bottom: 1px solid #b8b8b8; padding-left: 13px; white-space: nowrap; }
.cat-arr { position: absolute; left: 3px; top: 3px; width: 12px; height: 12px; }
.wi { height: 24px; display: flex; align-items: center; font-size: 15.400px; padding: 2px 0 0 5px; color: #1c1c1c; }
.wi svg { width: 20px; height: 20px; margin-right: 7px; flex: none; }

/* scrollbars */
.ar { width: 10px; height: 10px; flex: none; display: block; }
.vsb { width: 16px; flex: none; background: #f0f0f0; display: flex; flex-direction: column; align-items: center; padding: 3px 0; }
.vtrack { flex: 1; width: 100%; min-height: 0; }
.vthumb { background: #cdcdcd; width: 100%; }
.hsb { height: 16px; flex: none; background: #f0f0f0; display: flex; align-items: center; padding: 0 3px; }
.htrack { flex: 1; height: 100%; min-width: 0; }
.hthumb { background: #cdcdcd; height: 100%; }
.vsb-wb { margin-left: 1px; height: 100%; }
.vsb-wb .vthumb { margin-top: 62px; height: 307px; }

/* center */
.center { width: 819px; flex: none; display: flex; flex-direction: column; background: #3d3d3d; border-right: 1px solid #3d3d3d; }
.formarea { height: 436px; flex: none; display: grid; grid-template-columns: 802px 16px; grid-template-rows: 420px 16px; background: #fff; }
.canvas { padding: 13px 0 0 11px; overflow: hidden; background: #fff; }
.form { width: 791px; height: 407px; overflow: hidden; background-color: #f0f0f0; }
.form-tb { height: 45px; display: flex; align-items: stretch; background: #f0f0f0; border-bottom: 1px solid #aeaeae; padding-left: 4px; }
.handle { width: 4px; margin: 3px 4px 4px 0; background: radial-gradient(circle, #aaa 1px, transparent 1.200px) 0 0 / 4px 4px; }
.tbtn { display: flex; flex-direction: column; align-items: center; padding: 4px 13px 0; font-size: 16px; line-height: 22px; white-space: nowrap; color: #1a1a1a; font-family: "Noto Sans CJK SC", sans-serif; font-weight: 300; letter-spacing: .5px; }
.tbtn svg { width: 16px; height: 16px; margin-bottom: -3px; flex: none; }
.tbtn.dis { color: #7f7f7f; text-shadow: 1px 1px 0 #fff; }
.tbtn.dis svg { filter: grayscale(1) opacity(.75); }
.tsep { width: 1px; background: #c8c8c8; margin: 3px 3px 3px 4px; }
.design {
  display: flex; gap: 20px; padding-left: 28px; height: 362px; overflow: hidden;
  background-image: radial-gradient(circle at 5px 5px, #bdbdbd .6px, transparent .9px);
  background-size: 10px 10px;
}
.leftcol { width: 274px; flex: none; padding-top: 56px; font-family: "Noto Sans CJK SC", sans-serif; font-weight: 300; }
.gbox { border: 1px solid #d8d8d8; padding: 0 10px; }
.gbox-attr { height: 180px; }
.gbox-conv { height: 89px; margin-top: 17px; }
.gbox-rgb { height: 40px; margin-top: 17px; }
.gtitle { width: fit-content; padding: 0 4px; background: #f0f0f0; font-size: 16px; line-height: 20px; height: 20px; margin-top: -13px; letter-spacing: .5px; }
.gt-attr { margin-left: -3px; margin-bottom: 2px; }
.gt-conv { margin-left: 6px; margin-bottom: 2px; }
.gt-rgb { margin-left: -4px; font-size: 14.500px; }
.frow { height: 19.600px; display: flex; align-items: center; }
.frow-first { margin-top: 8px; }
.flabel { width: 85px; flex: none; height: 13px; overflow: hidden; font-size: 15px; line-height: 13px; letter-spacing: 1.600px; white-space: nowrap; }
.flabel-dpi { letter-spacing: 0; font-size: 14.500px; }
.finput { width: 167px; height: 12px; background: #fff; border: 1px solid #8a8a8a; }
.fchecks { display: flex; height: 21px; align-items: center; font-size: 15px; letter-spacing: .6px; margin-top: -1px; }
.fcheck { display: flex; align-items: center; white-space: nowrap; }
.fcheck-1 { width: 85px; }
.cb { display: inline-block; width: 13px; height: 13px; border: 1px solid #4a4a4a; background: #fff; flex: none; position: relative; }
.fcheck .cb { margin-right: 7px; }
.cb.on::after { content: ""; position: absolute; left: 2px; top: 1px; width: 5px; height: 8px; border: solid #444; border-width: 0 1.300px 1.300px 0; transform: rotate(40deg); }
.combo { height: 21px; margin-top: 14px; background: #e3e3e3; border: 1px solid #b6b6b6; display: flex; align-items: center; justify-content: space-between; padding: 2px 6px 0 3px; font: 15.500px "Liberation Mono", monospace; color: #333; }
.combo-ar { width: 12px; height: 12px; opacity: .6; margin-top: -2px; }
.pbtn { height: 27px; margin: 7px 1px 0; background: #e1e1e1; border: 1px solid #adadad; display: flex; align-items: center; justify-content: center; font-size: 16px; letter-spacing: .8px; color: #222; }
.pbtn svg { width: 16px; height: 16px; margin-right: 3px; flex: none; }
.tabw { width: 469px; flex: none; margin-top: 36px; display: flex; flex-direction: column; }
.tabbar { height: 23px; flex: none; display: flex; align-items: flex-end; padding-left: 1px; }
.tab { height: 23px; display: flex; align-items: center; font-family: "Noto Sans CJK SC", sans-serif; font-weight: 300; font-size: 16px; background: #f0f0f0; white-space: nowrap; }
.tab svg { width: 16px; height: 16px; flex: none; }
.tab-1 { width: 90px; padding-left: 13px; border: solid #dcdcdc; border-width: 1px 0 0 1px; }
.tab-1 svg { margin-right: 14px; }
.tab-2 { width: 138px; padding-left: 15px; background: #fff; height: 24px; border: 1px solid #dcdcdc; border-bottom: 0; font-size: 16px; }
.tab-2 svg { margin-right: 3px; }
.tabmono { font: 15.500px "Liberation Mono", monospace; }
.tabpane { flex: 1; background: #fff; border-top: 2px solid #808080; border-left: 1px solid #c4c4c4; position: relative; }
.cursor { position: absolute; left: 195px; top: 87px; width: 13px; height: 20px; }
.vsb-form .vtrack, .vsb-act .vtrack, .vsb-obj .vtrack, .vsb-prop .vtrack { overflow: hidden; }
.vsb-form { grid-row: 1 / 3; grid-column: 2; height: 420px; padding: 4px 0 3px; }
.vsb-form .vthumb { height: 266px; margin-top: 1px; }
.hsb-form { grid-row: 2; grid-column: 1 / 3; }
.hsb-form .hthumb { width: 694px; margin-left: 5px; }

/* action editor */
.action { flex: 1; min-height: 0; display: flex; flex-direction: column; border-top: 2px solid #3d3d3d; background: #fff; }
.act-tb { height: 24px; flex: none; display: flex; background: #3d3d3d; justify-content: space-between; align-items: center; }
.act-icons { display: flex; align-items: center; padding-left: 8px; gap: 10px; }
.act-icons svg { width: 19px; height: 19px; display: block; }
.act-filter { width: 336px; height: 23px; margin-top: 1px; }
.act-main { height: 220px; flex: none; display: flex; overflow: hidden; background: #fff; }
.act-table { width: 803px; flex: none; overflow: hidden; }
.arow { display: grid; grid-template-columns: 224px repeat(5, 125px); height: 24px; align-items: center; font-size: 15px; white-space: nowrap; overflow: hidden; }
.arow > span { padding-left: 3px; display: flex; align-items: center; overflow: hidden; }
.arow > span:first-child { padding-left: 5px; }
.arow .cb { margin-left: 0; }
.ahead { height: 29px; padding-top: 1px; font-size: 16px; }
.ahead > span { height: 29px; line-height: 29px; padding-left: 5px; border-right: 1px solid #e6e6e6; }
.ahead > span:first-child { padding-left: 5px; }
.an { font-size: 16px; }
.an svg { width: 15px; height: 15px; margin-right: 5px; flex: none; }
.vsb-act { width: 16px; height: 220px; padding: 4px 0; }
.vsb-act .vthumb { margin-top: 45px; height: 170px; }
.hsb-act .hthumb { width: 724px; margin-left: 5px; }
.act-tabs { flex: 1; min-height: 0; display: flex; background: #efefef; border-top: 1px solid #a8a8a8; font-size: 16px; }
.atab { padding: 1px 0 0 15px; width: 127px; background: #fff; line-height: 24px; height: 27px; margin-top: -1px; }
.atab + .atab { background: #efefef; width: 280px; margin-top: 0; height: 26px; border-bottom: 1px solid #d8d8d8; padding: 0 0 0 14px; }

/* right */
.right { flex: 1; min-width: 0; display: flex; flex-direction: column; border-left: 1px solid #3d3d3d; background: #3d3d3d; }
.obj { height: 446px; flex: none; display: flex; flex-direction: column; background: #fff; }
.obj-filter { margin-top: 1px; flex: none; line-height: 24px; }
.obj-main { height: 399px; margin-top: 7px; flex: none; display: flex; overflow: hidden; }
.tree { width: 226px; flex: none; overflow: hidden; }
.tree-head { height: 30px; line-height: 30px; padding-left: 4px; position: relative; font-size: 16px; }
.sortup { position: absolute; left: 195px; top: -2px; width: 10px; height: 10px; opacity: .7; }
.trow { height: 22px; line-height: 21px; white-space: nowrap; padding-left: 153px; overflow: hidden; font-size: 16px; position: relative; }
.trow.tall { height: 22.700px; }
.alt { background: #f6f6f6; }
.gb { padding-left: 150px; }
.tr-ar { position: absolute; left: 106px; top: 6px; width: 11px; height: 11px; }
.tr-ic { position: absolute; left: 128px; top: 4px; width: 15px; height: 15px; }
.tsel { display: block; background: #d2d2d2; margin-left: -3px; padding-left: 3px; }
.vsb-obj { width: 14px; padding: 5px 0; }
.vsb-obj .vthumb { margin-top: 70px; height: 72px; }
.hsb-obj .hthumb { width: 84px; margin-left: 3px; }
.prop { flex: 1; min-height: 0; display: flex; flex-direction: column; background: #fff; }
.prop-tb { height: 24px; margin-top: 3px; flex: none; display: flex; align-items: center; background: #3d3d3d; }
.prop-filter { width: 173px; flex: none; height: 23px; margin-top: -1px; line-height: 24px; }
.pt-ic { width: 16px; height: 16px; margin-left: 5px; }
.pt-ic:nth-of-type(2) { margin-left: 7px; }
.prop-class { height: 24px; line-height: 21px; flex: none; background: #f0f0f0; border-bottom: 1px solid #aaa; padding-left: 3px; font-size: 15.200px; white-space: nowrap; }
.prop-main { height: 211px; margin-top: 2px; flex: none; display: flex; overflow: hidden; }
.ptree { width: 226px; flex: none; overflow: hidden; }
.phead { height: 28px; line-height: 28px; padding-left: 5px; font-size: 16px; }
.psec { height: 24px; line-height: 23px; background: #9c9c9c; border-bottom: 1px solid #cfcfcf; color: #f3f3f3; font-weight: 700; font-size: 15px; padding-left: 23px; position: relative; }
.ps-ar { position: absolute; left: 4px; top: 6px; width: 11px; height: 11px; }
.prow { height: 24px; line-height: 23px; font-size: 15.800px; position: relative; padding-left: 28px; border-bottom: 1px solid #dcdcc4; color: #7b7b62; }
.y1 { background: #fdfcb4; }
.y2 { background: #feffdc; }
.prow .on { color: #111; }
.prow b { color: #75756a; font-size: 15px; }
.pg { left: 12px; }
.sub { padding-left: 53px; }
.vsb-prop { width: 14px; padding: 3px 0; }
.vsb-prop .vthumb { margin-top: 7px; height: 22px; }
.hsb-prop .hthumb { width: 117px; margin-left: 3px; }

/* status bar */
.status { height: 24px; flex: none; display: flex; align-items: center; background: #3e3e3e; color: #cfcfcf; font-size: 15.500px; overflow: hidden; margin-top: 1px; }
.st-toggle { width: 12px; height: 14px; background: linear-gradient(90deg, #5a5a5a 50%, #454545 50%); margin-left: 6px; flex: none; }
.locate { width: 201px; height: 21px; margin-left: 14px; background: #fff; color: #8a8a8a; display: flex; align-items: center; padding-left: 6px; font-size: 15px; flex: none; }
.locate svg { width: 15px; height: 15px; margin-right: 6px; }
.st-sep { width: 1px; height: 22px; background: #5c5c5c; margin-left: 2px; flex: none; }
.outs { display: flex; margin-left: 10px; flex: none; }
.out { width: 119.600px; display: flex; align-items: center; white-space: nowrap; }
.out-1 { width: 90px; }
.out-issues { font-size: 14.800px; }
.out em { margin-right: 7px; }
.badge { display: inline-block; width: 14px; height: 14px; border-radius: 50%; background: #b0b0b0; color: #444; font: 700 10px/14px "Open Sans", sans-serif; text-align: center; margin-left: 2px; }
.st-updn { width: 8px; height: 14px; flex: none; }
.st-box { width: 18px; height: 22px; background: #252525; margin-left: 67px; display: flex; align-items: center; justify-content: center; flex: none; }
.st-box svg { width: 14px; height: 14px; }
.st-toggle-r { margin-left: 15px; }
```
